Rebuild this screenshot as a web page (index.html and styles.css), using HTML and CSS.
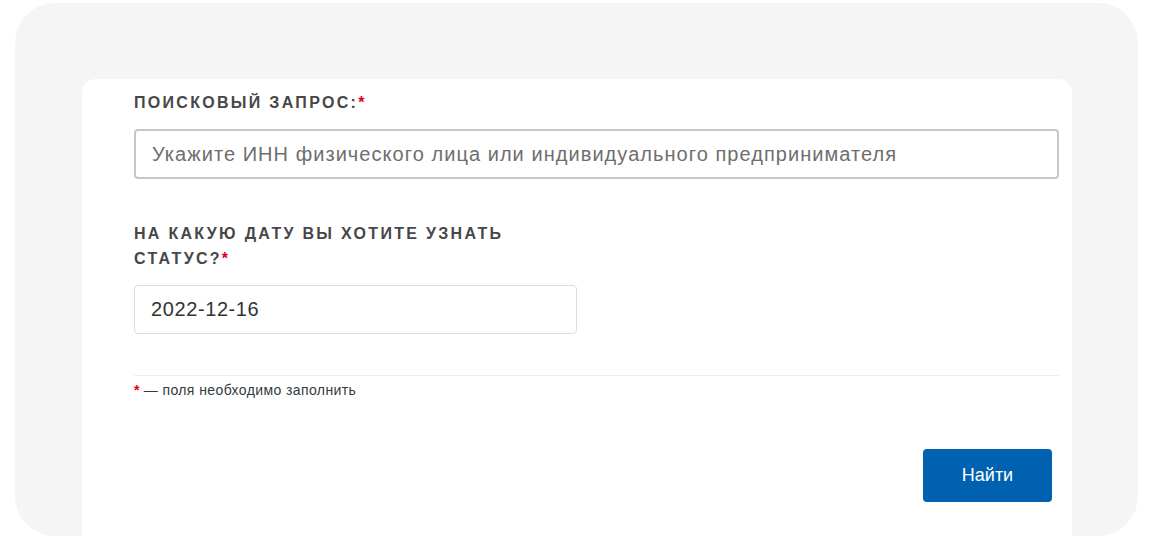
FILE: index.html
```html
<!DOCTYPE html>
<html lang="ru">
<head>
<meta charset="utf-8">
<link rel="stylesheet" href="styles.css">
</head>
<body>
<div class="panel">
  <form class="card">
    <label class="label">Поисковый запрос:<span class="req">*</span></label>
    <div class="input input-wide">
      <span class="placeholder">Укажите ИНН физического лица или индивидуального предпринимателя</span>
    </div>
    <div class="row">
      <div class="col">
        <label class="label label-multi">На какую дату вы хотите узнать<br>статус?<span class="req">*</span></label>
        <div class="input input-date"><span class="value">2022-12-16</span></div>
      </div>
      <div class="col"></div>
    </div>
    <div class="note"><span class="req">*</span> — поля необходимо заполнить</div>
    <div class="actions">
      <button type="button" class="btn">Найти</button>
    </div>
  </form>
</div>
</body>
</html>
```
FILE: styles.css
```css
* { box-sizing: border-box; }
html, body { margin: 0; padding: 0; background: #ffffff; }
body {
  font-family: "Liberation Sans", Arial, sans-serif;
  width: 1152px;
  height: 544px;
  overflow: hidden;
}
.panel {
  margin: 3px 14px 0 15px;
  height: 533px;
  background: #f5f5f5;
  border-radius: 40px;
  padding: 76px 66px 0 67px;
}
.card {
  background: #ffffff;
  border-radius: 14px 14px 0 0;
  height: 100%;
  padding: 14px 13px 0 52px;
  display: flex;
  flex-direction: column;
}
.label {
  display: block;
  font-size: 16px;
  font-weight: bold;
  text-transform: uppercase;
  letter-spacing: 2.3px;
  color: #474747;
  line-height: 20px;
}
.label-multi { line-height: 25px; }
.req { color: #e3000f; font-weight: bold; letter-spacing: 0; }
.input {
  background: #fff;
  border-radius: 4px;
  display: flex;
  align-items: center;
  padding: 0 16px;
}
.input-wide {
  margin-top: 16px;
  height: 50px;
  border: 2px solid #c7c7c7;
}
.placeholder { font-size: 20px; letter-spacing: 1.05px; color: #6e6e6e; }
.row {
  display: grid;
  grid-template-columns: 1fr 1fr;
  column-gap: 40px;
  margin-top: 42px;
}
.input-date {
  margin-top: 14px;
  height: 49px;
  border: 1px solid #dcdcdc;
}
.value { font-size: 20px; letter-spacing: 0.6px; color: #333; }
.note {
  margin-top: 41px;
  border-top: 1px solid #eeeeee;
  padding-top: 6px;
  font-size: 14px;
  letter-spacing: 0.4px;
  color: #333a3f;
}
.actions {
  display: flex;
  justify-content: flex-end;
  margin-top: 51px;
  padding-right: 7px;
}
.btn {
  width: 129px;
  height: 53px;
  background: #0061b0;
  color: #fff;
  border: none;
  border-radius: 4px;
  font-family: "Liberation Sans", Arial, sans-serif;
  font-size: 18px;
}
```
